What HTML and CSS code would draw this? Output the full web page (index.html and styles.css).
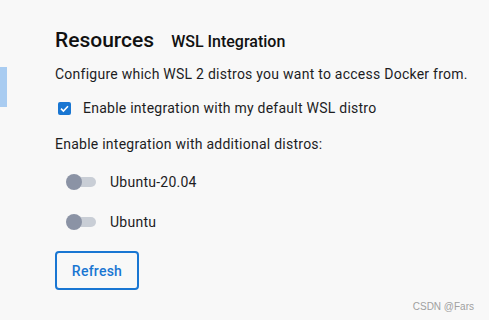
FILE: index.html
```html
<!DOCTYPE html>
<html lang="en">
<head>
  <meta charset="UTF-8" />
  <meta name="viewport" content="width=device-width, initial-scale=1.0"/>
  <title>Resources - WSL Integration</title>
  <link rel="stylesheet" href="styles.css">
</head>
<body>
  <div class="page">
    <div class="sidebar">
      <div class="sidebar-mark"></div>
    </div>

    <main class="content">
      <h1 class="title">Resources <span class="sub">WSL Integration</span></h1>
      <p class="desc">Configure which WSL 2 distros you want to access Docker from.</p>

      <label class="check-row">
        <span class="checkbox">
          <svg width="13" height="13" viewBox="0 0 13 13"><path d="M3 6.6 L5.4 9 L10 4.3" fill="none" stroke="#fff" stroke-width="1.6"/></svg>
        </span>
        Enable integration with my default WSL distro
      </label>

      <p class="desc extra">Enable integration with additional distros:</p>

      <div class="distro">
        <span class="toggle"><span class="thumb"></span></span>
        Ubuntu-20.04
      </div>
      <div class="distro">
        <span class="toggle"><span class="thumb"></span></span>
        Ubuntu
      </div>

      <button class="refresh">Refresh</button>
    </main>
  </div>

  <div class="watermark">CSDN @Fars</div>
</body>
</html>
```

FILE: styles.css
```css
body {
  margin: 0;
  background: #f8f8f8;
  color: #1d1d1f;
  font-family: Roboto, "Noto Sans", sans-serif;
  font-size: 14px;
  letter-spacing: 0.25px;
  height: 320px;
  overflow: hidden;
  position: relative;
}

.page {
  display: flex;
}

.sidebar {
  width: 7px;
  padding-top: 67px;
}

.sidebar-mark {
  height: 40px;
  background: #a9ccf1;
}

.content {
  padding: 28px 0 0 48px;
  display: flex;
  flex-direction: column;
  align-items: flex-start;
}

.title {
  margin: 0;
  font-size: 21px;
  font-weight: 500;
  line-height: 24px;
  letter-spacing: 0;
  display: flex;
  align-items: baseline;
  gap: 17px;
  color: #111;
}

.title .sub {
  font-size: 16px;
}

.desc {
  margin: 10px 0 0;
  line-height: 20px;
}

.check-row {
  margin-top: 14px;
  display: flex;
  align-items: center;
  line-height: 20px;
}

.checkbox {
  width: 13px;
  height: 13px;
  margin: 0 12px 0 3px;
  background: #1976d2;
  border-radius: 2px;
  display: flex;
}

.desc.extra {
  margin-top: 16px;
}

.distro {
  margin-top: 18px;
  display: flex;
  align-items: center;
  line-height: 20px;
}

.distro + .distro {
  margin-top: 20px;
}

.toggle {
  width: 30px;
  height: 20px;
  margin: 0 14px 0 11px;
  display: flex;
  align-items: center;
  position: relative;
}

.toggle::before {
  content: "";
  width: 24px;
  height: 10px;
  margin-left: 6px;
  border-radius: 5px;
  background: #c9ced6;
}

.thumb {
  position: absolute;
  left: 0;
  top: 2px;
  width: 16px;
  height: 16px;
  border-radius: 50%;
  background: #8b93a5;
}

.refresh {
  margin-top: 19px;
  width: 84px;
  height: 39px;
  background: none;
  border: 2px solid #1976d2;
  border-radius: 4px;
  color: #1976d2;
  font-family: inherit;
  font-size: 14px;
  font-weight: 500;
  letter-spacing: 0.25px;
  cursor: pointer;
}

.watermark {
  position: absolute;
  right: 15px;
  bottom: 8px;
  font-family: "Liberation Sans", sans-serif;
  font-size: 10px;
  letter-spacing: 0;
  color: #a0a0a0;
}
```
